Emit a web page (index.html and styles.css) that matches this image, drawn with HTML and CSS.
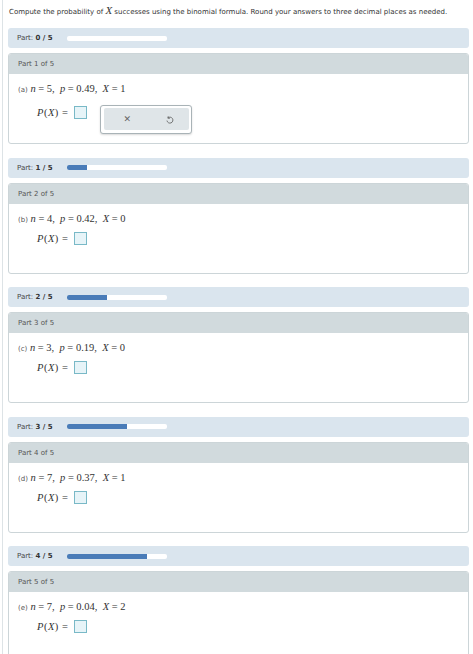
FILE: index.html
```html
<!DOCTYPE html>
<html lang="en">
<head>
    <meta charset="UTF-8" />
    <title>Binomial Probability</title>
    <link rel="stylesheet" href="styles.css">
</head>
<body>
<div class="page">
    <p class="question">Compute the probability of <span class="mvar big">X</span> successes using the binomial formula. Round your answers to three decimal places as needed.</p>

    <div class="section">
        <div class="part-bar">
            <span class="part-lbl">Part: <b>0 / 5</b></span>
            <div class="track"><div class="fill" style="width: 0%"></div></div>
        </div>
        <div class="card">
            <div class="card-head">Part 1 of 5</div>
            <div class="card-body">
                <div class="given"><span class="lbl">(a)</span> <span class="mvar">n</span> = 5,&nbsp; <span class="mvar">p</span> = 0.49,&nbsp; <span class="mvar">X</span> = 1</div>
                <div class="answer open">
                    <span class="math"><span class="mvar">P</span>(<span class="mvar">X</span>) =</span>
                    <span class="box"></span>
                    <div class="tools">
                        <div class="tools-inner">
                            <span class="tool close">&#x2715;</span>
                            <svg class="tool undo" width="9" height="9" viewBox="0 0 10 10"><path d="M3.2 3.3 A3.3 3.3 0 1 1 2.2 6.2" fill="none" stroke="#666" stroke-width="1"/><path d="M3.6 1.4 L3.2 3.5 L5.3 3.8" fill="none" stroke="#666" stroke-width="1"/></svg>
                        </div>
                    </div>
                </div>
            </div>
        </div>
    </div>

    <div class="section">
        <div class="part-bar">
            <span class="part-lbl">Part: <b>1 / 5</b></span>
            <div class="track"><div class="fill" style="width: 20%"></div></div>
        </div>
        <div class="card">
            <div class="card-head">Part 2 of 5</div>
            <div class="card-body">
                <div class="given"><span class="lbl">(b)</span> <span class="mvar">n</span> = 4,&nbsp; <span class="mvar">p</span> = 0.42,&nbsp; <span class="mvar">X</span> = 0</div>
                <div class="answer">
                    <span class="math"><span class="mvar">P</span>(<span class="mvar">X</span>) =</span>
                    <span class="box"></span>
                </div>
            </div>
        </div>
    </div>

    <div class="section">
        <div class="part-bar">
            <span class="part-lbl">Part: <b>2 / 5</b></span>
            <div class="track"><div class="fill" style="width: 40%"></div></div>
        </div>
        <div class="card">
            <div class="card-head">Part 3 of 5</div>
            <div class="card-body">
                <div class="given"><span class="lbl">(c)</span> <span class="mvar">n</span> = 3,&nbsp; <span class="mvar">p</span> = 0.19,&nbsp; <span class="mvar">X</span> = 0</div>
                <div class="answer">
                    <span class="math"><span class="mvar">P</span>(<span class="mvar">X</span>) =</span>
                    <span class="box"></span>
                </div>
            </div>
        </div>
    </div>

    <div class="section">
        <div class="part-bar">
            <span class="part-lbl">Part: <b>3 / 5</b></span>
            <div class="track"><div class="fill" style="width: 60%"></div></div>
        </div>
        <div class="card">
            <div class="card-head">Part 4 of 5</div>
            <div class="card-body">
                <div class="given"><span class="lbl">(d)</span> <span class="mvar">n</span> = 7,&nbsp; <span class="mvar">p</span> = 0.37,&nbsp; <span class="mvar">X</span> = 1</div>
                <div class="answer">
                    <span class="math"><span class="mvar">P</span>(<span class="mvar">X</span>) =</span>
                    <span class="box"></span>
                </div>
            </div>
        </div>
    </div>

    <div class="section">
        <div class="part-bar">
            <span class="part-lbl">Part: <b>4 / 5</b></span>
            <div class="track"><div class="fill" style="width: 80%"></div></div>
        </div>
        <div class="card">
            <div class="card-head">Part 5 of 5</div>
            <div class="card-body">
                <div class="given"><span class="lbl">(e)</span> <span class="mvar">n</span> = 7,&nbsp; <span class="mvar">p</span> = 0.04,&nbsp; <span class="mvar">X</span> = 2</div>
                <div class="answer">
                    <span class="math"><span class="mvar">P</span>(<span class="mvar">X</span>) =</span>
                    <span class="box"></span>
                </div>
            </div>
        </div>
    </div>
</div>
</body>
</html>
```

FILE: styles.css
```css
body {
    margin: 0;
    font-family: "DejaVu Sans", Verdana, sans-serif;
    color: #333;
    background: #fff;
}
.page {
    margin-left: 2px;
    border-left: 1px solid #dde3e6;
    padding: 0 4px 0 5px;
    min-height: 654px;
}
.question {
    margin: 0;
    padding: 4px 0 0 1px;
    height: 24px;
    font-size: 7px;
    line-height: 12px;
    white-space: nowrap;
}
.mvar {
    font-family: "Liberation Serif", "Times New Roman", serif;
    font-style: italic;
}
.mvar.big {
    font-size: 11px;
}
.section {
    margin-bottom: 13.5px;
}
.part-bar {
    display: flex;
    align-items: center;
    height: 20px;
    padding-left: 9px;
    background: #dae5ee;
    border-radius: 3px;
    font-size: 7px;
    color: #444;
}
.part-lbl {
    width: 50px;
}
.part-bar b {
    color: #333;
}
.track {
    width: 100px;
    height: 5px;
    background: #fff;
    border-radius: 2px;
    overflow: hidden;
}
.fill {
    height: 100%;
    background: #4a7cb8;
}
.card {
    margin-top: 5px;
    border: 1px solid #ccd5d8;
    border-radius: 3px;
    height: 89px;
    overflow: hidden;
}
.card-head {
    height: 20px;
    line-height: 21px;
    padding-left: 9px;
    background: #d1dadd;
    font-size: 7px;
    color: #555;
}
.card-body {
    padding: 8px 0 0 9px;
}
.given {
    font-size: 10.5px;
    line-height: 14px;
    font-family: "Liberation Serif", "Times New Roman", serif;
    color: #333;
}
.lbl {
    font-family: "DejaVu Sans", Verdana, sans-serif;
    font-size: 7px;
    color: #555;
}
.answer {
    display: flex;
    align-items: flex-start;
    margin-top: 5px;
    padding-left: 19px;
}
.answer.open {
    margin-top: 9px;
}
.math {
    font-family: "Liberation Serif", "Times New Roman", serif;
    font-size: 10.5px;
    line-height: 14px;
    letter-spacing: 0.5px;
    color: #333;
}
.box {
    display: inline-block;
    width: 11px;
    height: 11px;
    margin-left: 6px;
    border: 1px solid #79b9c7;
    background: #e7f4f8;
}
.tools {
    box-sizing: border-box;
    margin: -1px 0 0 13px;
    width: 92px;
    height: 29px;
    padding: 2px 2px 3px 3px;
    border: 1px solid #a9b3b7;
    border-radius: 3px;
    box-shadow: 0 1px 2px rgba(0, 0, 0, 0.15);
    background: #fff;
}
.tools-inner {
    display: flex;
    align-items: center;
    height: 100%;
    background: #dfe5e8;
    border-radius: 2px;
}
.tool {
    font-size: 9px;
    color: #666;
}
.close {
    margin-left: 19px;
}
.undo {
    margin-left: 34px;
}
```
